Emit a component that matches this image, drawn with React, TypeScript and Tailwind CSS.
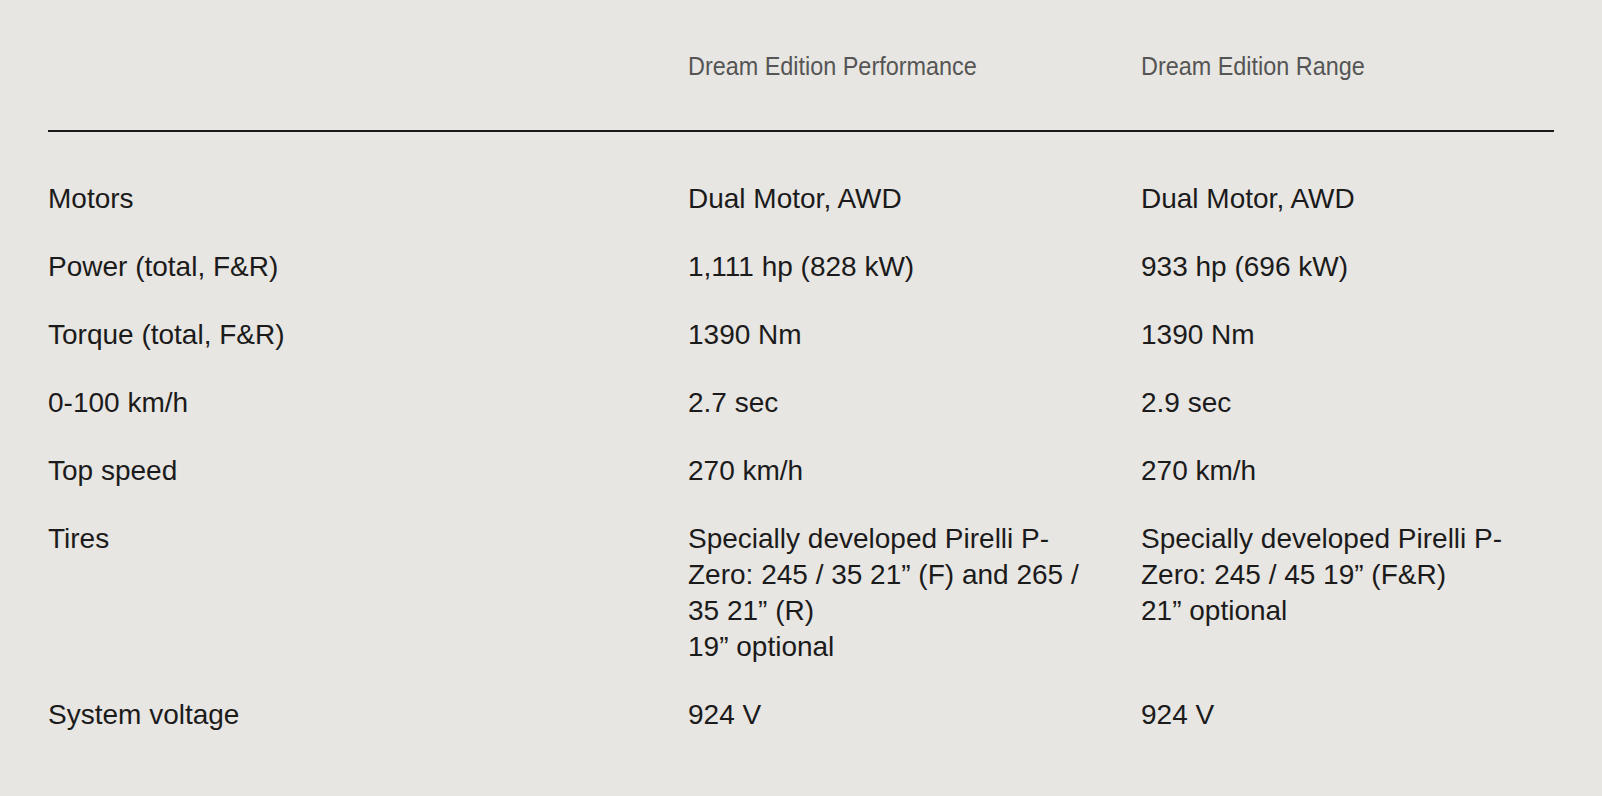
const body = "font-['Liberation_Sans',_Arial,_sans-serif]";
// no condensed face installed, so squeeze the regular one
const head = "font-['Liberation_Sans',_Arial,_sans-serif] text-[26px] leading-[36px] text-[#555555] origin-left scale-x-90";

const rows: { label: string; a: string[]; b: string[] }[] = [
  { label: "Motors", a: ["Dual Motor, AWD"], b: ["Dual Motor, AWD"] },
  { label: "Power (total, F&R)", a: ["1,111 hp (828 kW)"], b: ["933 hp (696 kW)"] },
  { label: "Torque (total, F&R)", a: ["1390 Nm"], b: ["1390 Nm"] },
  { label: "0-100 km/h", a: ["2.7 sec"], b: ["2.9 sec"] },
  { label: "Top speed", a: ["270 km/h"], b: ["270 km/h"] },
  {
    label: "Tires",
    a: ["Specially developed Pirelli P-Zero: 245 / 35 21\u201d (F) and 265 / 35 21\u201d (R)", "19\u201d optional"],
    b: ["Specially developed Pirelli P-Zero: 245 / 45 19\u201d (F&R)", "21\u201d optional"],
  },
  { label: "System voltage", a: ["924 V"], b: ["924 V"] },
];

export default function App() {
  return (
    <div className="min-h-screen bg-[#e8e6e2] px-12 pt-12 pb-12 text-[#1b1b1b]">
      <div className="grid grid-cols-[600px_1fr_1fr] gap-x-10 border-b-2 border-[#1b1b1b] pb-[46px]">
        <div />
        <div className={head}>Dream Edition Performance</div>
        <div className={head}>Dream Edition Range</div>
      </div>
      <div className={`${body} grid grid-cols-[600px_1fr_1fr] gap-x-10 gap-y-8 pt-[49px] text-[28px] leading-[36px]`}>
        {rows.map((r) => (
          <>
            <div key={r.label + "-l"}>{r.label}</div>
            <div key={r.label + "-a"}>
              {r.a.map((t, i) => (
                <p key={i}>{t}</p>
              ))}
            </div>
            <div key={r.label + "-b"}>
              {r.b.map((t, i) => (
                <p key={i}>{t}</p>
              ))}
            </div>
          </>
        ))}
      </div>
    </div>
  );
}
